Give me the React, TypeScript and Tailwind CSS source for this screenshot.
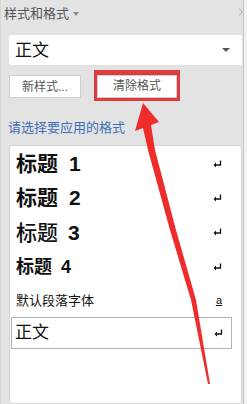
import { ChevronRight } from "lucide-react";

const FONT = { fontFamily: '"Liberation Sans", "Noto Sans CJK SC", sans-serif' };

function ReturnMark() {
  return (
    <svg width="9" height="8" viewBox="0 0 9 8" className="shrink-0">
      <path d="M7.5 0.5 V5 H2" stroke="#111" strokeWidth="1.3" fill="none" />
      <path d="M0.5 5 L3 2.5 V7.5 Z" fill="#111" />
    </svg>
  );
}

function StyleRow({
  num,
  className,
  height,
  gap,
}: {
  num: string;
  className: string;
  height: string;
  gap: string;
}) {
  return (
    <div className={`flex items-center justify-between pl-[6px] pr-[19px] ${height}`}>
      <span className={`flex items-center text-[#111] leading-none ${className}`}>
        <span>标题</span>
        <span className={`font-bold ${gap}`}>{num}</span>
      </span>
      <ReturnMark />
    </div>
  );
}

export default function App() {
  return (
    <div className="relative flex w-[247px] h-[404px] overflow-hidden bg-[#f2f2f2]" style={FONT}>
      <div className="flex flex-col w-[244px] h-full bg-[#e3e3e3] border-r border-[#c4c4c4] border-l border-l-[#d6d6d6]">
        {/* header */}
        <div className="relative flex items-center h-[26px] pl-[3px]">
          <span className="text-[13px] text-[#555] leading-none">样式和格式</span>
          <span className="ml-[4px] mt-[2px] w-0 h-0 border-l-[3px] border-r-[3px] border-t-[4px] border-l-transparent border-r-transparent border-t-[#888]" />
          <ChevronRight className="absolute right-[-4px] top-[6px] w-[12px] h-[12px] text-[#888]" strokeWidth={1.5} />
        </div>

        {/* current style */}
        <div className="mt-[9px] ml-[8px] mr-[1px] h-[30px] bg-white rounded-[2px] flex items-center justify-between pl-[6px] pr-[12px]">
          <span className="text-[17px] text-[#111] leading-none">正文</span>
          <span className="w-0 h-0 border-l-[4px] border-r-[4px] border-t-[4px] border-l-transparent border-r-transparent border-t-[#555]" />
        </div>

        {/* buttons */}
        <div className="flex items-center mt-[5px] ml-[8px] gap-[13px]">
          <button className="w-[72px] h-[23px] mt-[3px] bg-white border border-[#cfcfcf] text-[12px] text-[#555] leading-none">
            新样式...
          </button>
          <div className="border-[3px] border-[#dc3c3f] bg-[#dc3c3f]">
            <button className="w-[80px] h-[23px] bg-white border border-[#cfcfcf] text-[12px] text-[#555] leading-none">
              清除格式
            </button>
          </div>
        </div>

        <div className="mt-[20px] ml-[7px] text-[13px] text-[#3d6fb6] leading-none">请选择要应用的格式</div>

        {/* style list */}
        <div className="mt-[11px] ml-[8px] mr-[1px] flex-1 bg-white border border-[#d3d3d3] rounded-[3px] pt-[1px]">
          <StyleRow num="1" className="text-[21px] font-bold" height="h-[34px]" gap="ml-[11px]" />
          <StyleRow num="2" className="text-[21px] font-bold" height="h-[34px]" gap="ml-[11px]" />
          <StyleRow num="3" className="text-[21px] font-medium" height="h-[35px]" gap="ml-[10px]" />
          <StyleRow num="4" className="text-[18px] font-bold" height="h-[35px]" gap="ml-[9px]" />
          <div className="flex items-center justify-between h-[32px] pl-[6px] pr-[19px]">
            <span className="text-[13px] text-[#111] leading-none">默认段落字体</span>
            <span className="text-[11px] text-[#111] underline leading-none">a</span>
          </div>
          <div className="ml-[1px] w-[221px] h-[32px] border border-[#a9b3bd] flex items-center justify-between pl-[3px] pr-[8px]">
            <span className="text-[17px] text-[#111] leading-none">正文</span>
            <ReturnMark />
          </div>
        </div>
      </div>

      {/* annotation arrow */}
      <svg className="absolute inset-0 pointer-events-none" width="247" height="404" viewBox="0 0 247 404">
        <polygon
          fill="#ee2c2c"
          points="143,103 159,122 151,125 155,150 176,230 196,300 210,384 208,384 191,300 170,230 148,150 143,128 135,131"
        />
      </svg>
    </div>
  );
}
